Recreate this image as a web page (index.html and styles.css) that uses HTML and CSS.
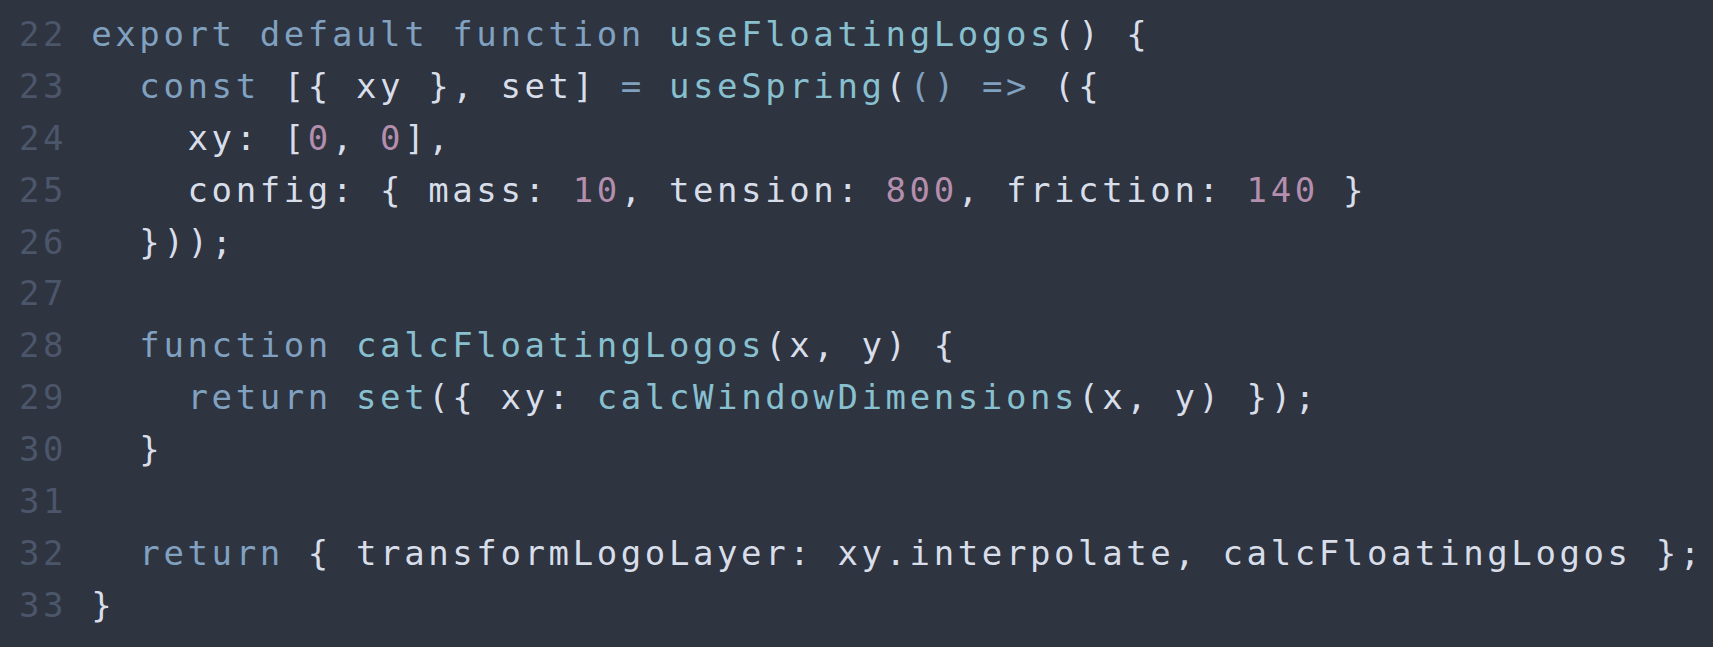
FILE: index.html
```html
<!DOCTYPE html>
<html lang="en">
<head>
<meta charset="utf-8">
<title>useFloatingLogos</title>
<link rel="stylesheet" href="styles.css">
</head>
<body>
<div class="code">
<div class="line"><span class="ln">22</span> <span class="kw">export</span> <span class="kw">default</span> <span class="kw">function</span> <span class="fn">useFloatingLogos</span><span class="p">() {</span></div>
<div class="line"><span class="ln">23</span>   <span class="kw">const</span> <span class="p">[{ xy }, set]</span> <span class="kw">=</span> <span class="fn">useSpring</span><span class="p">(</span><span class="kw">()</span> <span class="kw">=&gt;</span> <span class="p">({</span></div>
<div class="line"><span class="ln">24</span>     <span class="p">xy: [</span><span class="num">0</span><span class="p">, </span><span class="num">0</span><span class="p">],</span></div>
<div class="line"><span class="ln">25</span>     <span class="p">config: { mass: </span><span class="num">10</span><span class="p">, tension: </span><span class="num">800</span><span class="p">, friction: </span><span class="num">140</span><span class="p"> }</span></div>
<div class="line"><span class="ln">26</span>   <span class="p">}));</span></div>
<div class="line"><span class="ln">27</span></div>
<div class="line"><span class="ln">28</span>   <span class="kw">function</span> <span class="fn">calcFloatingLogos</span><span class="p">(x, y) {</span></div>
<div class="line"><span class="ln">29</span>     <span class="kw">return</span> <span class="fn">set</span><span class="p">({ xy: </span><span class="fn">calcWindowDimensions</span><span class="p">(x, y) });</span></div>
<div class="line"><span class="ln">30</span>   <span class="p">}</span></div>
<div class="line"><span class="ln">31</span></div>
<div class="line"><span class="ln">32</span>   <span class="kw">return</span> <span class="p">{ transformLogoLayer: xy.interpolate, calcFloatingLogos };</span></div>
<div class="line"><span class="ln">33</span> <span class="p">}</span></div>
</div>
</body>
</html>
```
FILE: styles.css
```css
html, body {
  margin: 0;
  padding: 0;
  background: #2e3440;
}

.code {
  padding: 9px 0 0 19px;
  font-family: "DejaVu Sans Mono", "Liberation Mono", monospace;
  font-size: 34px;
  letter-spacing: 3.6px;
  line-height: 51.875px;
  color: #d8dee9;
}

.line {
  white-space: pre;
  height: 51.875px;
}

.ln {
  color: #4c566a;
}

.kw {
  color: #81a1c1;
}

.fn {
  color: #88c0d0;
}

.num {
  color: #b48ead;
}

.p {
  color: #d8dee9;
}
```
